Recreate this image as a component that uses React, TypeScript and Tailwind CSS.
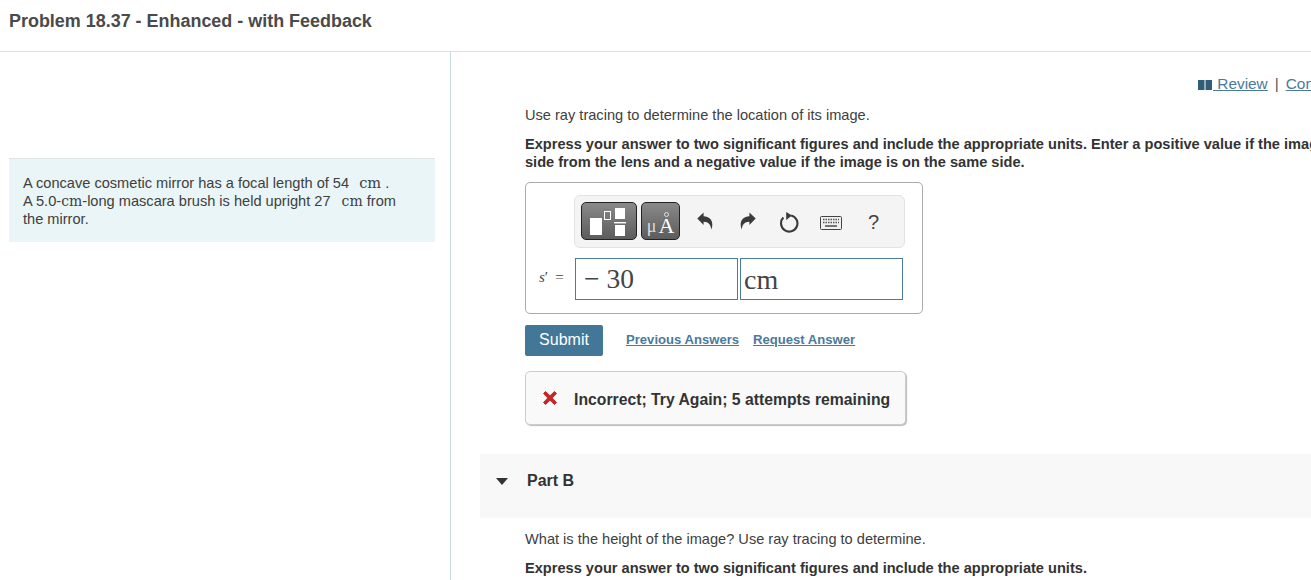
function UndoIcon({ flip = false }: { flip?: boolean }) {
  return (
    <svg width="16" height="18" viewBox="0 0 16 18" className={flip ? "-scale-x-100" : ""}>
      <path d="M0.3 6.6 L6.6 0.6 V4.2 C12 4.4 15.6 7.6 15.3 13 C15.2 14.6 14.8 16.4 14.2 17.4 C14 13.2 11.6 9.8 6.6 9.8 V13 Z" fill="#3a3a3a" />
    </svg>
  )
}

function MathToolbar() {
  return (
    <div className="flex h-[53px] w-[331px] items-center rounded-[6px] border border-[#e3e3e3] bg-[#f4f4f4] pl-[6px]">
      <div className="mb-[1px] flex h-[38px] w-[56px] items-center justify-center rounded-[5px] border border-[#222] bg-gradient-to-b from-[#8a8a8a] to-[#5c5c5c]">
        <svg width="54" height="36" viewBox="0 0 54 36">
          <rect x="8" y="15" width="12" height="17" fill="#fff" />
          <rect x="22.5" y="8.5" width="6" height="8" fill="none" stroke="#fff" strokeWidth="1" />
          <rect x="33" y="5" width="10" height="11" fill="#fff" />
          <rect x="32" y="19" width="12" height="1.4" fill="#fff" />
          <rect x="33" y="22" width="10" height="11" fill="#fff" />
        </svg>
      </div>
      <div className="relative mb-[1px] ml-[4px] flex h-[38px] w-[39px] items-end justify-center rounded-[5px] border border-[#222] bg-gradient-to-b from-[#8a8a8a] to-[#5c5c5c] pb-[1px] font-['Liberation_Serif',serif] leading-[24px] text-white">
        <span className="mt-[3px] text-[18px] text-[#dedede]">μ</span>
        <span className="ml-[2px] text-[22px]">A</span>
        <span className="absolute left-[22px] top-[9px] h-[5px] w-[5px] rounded-full border border-[#e0e0e0]" />
      </div>
      <div className="mb-[2px] ml-[17px] flex h-[18px] w-[16px]">
        <UndoIcon />
      </div>
      <div className="mb-[2px] ml-[27px] flex h-[18px] w-[16px]">
        <UndoIcon flip />
      </div>
      <svg width="20" height="21" viewBox="0 0 20 21" className="ml-[23px] mt-[1px]">
        <path d="M12.2 3.4 A8.2 8.2 0 1 1 4.4 5.6" fill="none" stroke="#3a3a3a" strokeWidth="2.1" />
        <path d="M7.2 0 L13 3.5 L7.2 8 Z" fill="#3a3a3a" />
      </svg>
      <svg width="22" height="14" viewBox="0 0 22 14" className="ml-[21px] mt-[3px]">
        <rect x="0.5" y="0.5" width="21" height="13" rx="1" fill="#f0f0f0" stroke="#444" />
        <path d="M3 3.5h16M3 6.5h16" stroke="#555" strokeWidth="1.6" strokeDasharray="1.5 1" />
        <path d="M5 10h12" stroke="#555" strokeWidth="1.6" />
      </svg>
      <span className="ml-[26px] text-[20px] leading-none text-[#444]">?</span>
    </div>
  )
}

export default function App() {
  return (
    <div className="h-[580px] w-[1311px] overflow-hidden bg-white font-['Liberation_Sans',sans-serif] text-[14.6px] text-[#404040]">
      <div className="flex h-[52px] items-start border-b border-[#e0e0e0] pl-[9px] pt-[10px]">
        <h1 className="text-[17.95px] font-bold leading-[22px] text-[#4a4a4a]">Problem 18.37 - Enhanced - with Feedback</h1>
      </div>

      <div className="flex h-[528px]">
        <div className="w-[451px] shrink-0 border-r border-[#c5d9e3] pl-[9px] pr-[15px] pt-[106px]">
          <div className="h-[84px] border-t border-[#dfe5e5] bg-[#e9f5f6] px-[14px] pt-[15px] leading-[18px]">
            A concave cosmetic mirror has a focal length of 54 <span className="ml-[6px] font-['DejaVu_Serif',serif] text-[14.6px]">cm</span> .<br />
            A 5.0-<span className="font-['DejaVu_Serif',serif] text-[14px]">cm</span>-long mascara brush is held upright 27 <span className="ml-[7px] font-['DejaVu_Serif',serif] text-[14px]">cm</span> from<br />
            the mirror.
          </div>
        </div>

        <div className="min-w-0 flex-1 overflow-hidden">
          <div className="flex h-[54px] justify-start pl-[747px] pt-[23px] whitespace-nowrap text-[15.4px] text-[#4b7a9b]">
            <svg width="14" height="10" viewBox="0 0 14 10" className="mt-[5px] shrink-0">
              <rect x="0" y="0" width="6.5" height="10" fill="#2f5d7a" />
              <rect x="7.5" y="0" width="6.5" height="10" fill="#2f5d7a" />
            </svg>
            <a className="ml-[1px] whitespace-pre underline leading-[18px]"> Review</a>
            <span className="mx-[7px] leading-[18px] text-[#555]">|</span>
            <a className="underline leading-[18px]">Constants</a>
          </div>

          <div className="pl-[74px]">
            <p className="leading-[18px]">Use ray tracing to determine the location of its image.</p>
            <p className="mt-[11px] whitespace-nowrap font-bold leading-[18px] text-[#333]">
              Express your answer to two significant figures and include the appropriate units. Enter a positive value if the image is on the opposite<br />
              side from the lens and a negative value if the image is on the same side.
            </p>

            <div className="mt-[11px] h-[132px] w-[398px] rounded-[5px] border border-[#aaa] pl-[48px] pt-[12px]">
              <MathToolbar />
              <div className="relative ml-[1px] mt-[10px] flex">
                <span className="absolute left-[-36px] top-[10px] whitespace-nowrap font-['Liberation_Serif',serif] text-[15px] leading-[18px] text-[#444]">
                  <i>s</i>′<span className="ml-[7px]">=</span>
                </span>
                <div className="h-[42px] w-[163px] border border-[#4a7c9e] pl-[8px] font-['Liberation_Serif',serif] text-[27.5px] leading-[40px] text-[#444]">− 30</div>
                <div className="ml-[2px] h-[42px] w-[163px] border border-[#4a7c9e] pl-[3px] font-['Liberation_Serif',serif] text-[28px] leading-[42px] text-[#444]">cm</div>
              </div>
            </div>

            <div className="mt-[11px] flex items-center">
              <button className="h-[31px] w-[78px] rounded-[2px] bg-[#437797] pb-[2px] text-[16px] text-white">Submit</button>
              <a className="mb-[2px] ml-[23px] text-[13.1px] font-bold text-[#4b7a9b] underline">Previous Answers</a>
              <a className="mb-[2px] ml-[14px] text-[13.1px] font-bold text-[#4b7a9b] underline">Request Answer</a>
            </div>

            <div className="mt-[15px] flex h-[54px] w-[381px] items-center rounded-[5px] border border-[#ccc] bg-[#f9f9f9] pl-[16px] shadow-[1px_1px_1px_#bbb]">
              <svg width="16" height="16" viewBox="0 0 16 16">
                <path d="M1.5 3.5 L3.5 1.5 L8 5.8 L12.5 1.5 L14.5 3.5 L10.2 8 L14.5 12.5 L12.5 14.5 L8 10.2 L3.5 14.5 L1.5 12.5 L5.8 8 Z" fill="#c62828" stroke="#c62828" />
              </svg>
              <span className="ml-[16px] mt-[3px] text-[15.75px] font-bold text-[#333]">Incorrect; Try Again; 5 attempts remaining</span>
            </div>
          </div>

          <div className="ml-[29px] mt-[29px] flex h-[64px] items-center bg-[#f8f8f8] pb-[10px] pl-[16px]">
            <span className="h-0 w-0 border-x-[6px] border-t-[7px] border-x-transparent border-t-[#333]" />
            <span className="ml-[19px] text-[16px] font-bold text-[#333]">Part B</span>
          </div>

          <div className="pl-[74px]">
            <p className="mt-[12px] leading-[18px]">What is the height of the image? Use ray tracing to determine.</p>
            <p className="mt-[11px] font-bold leading-[18px] text-[#333]">Express your answer to two significant figures and include the appropriate units.</p>
          </div>
        </div>
      </div>
    </div>
  )
}
